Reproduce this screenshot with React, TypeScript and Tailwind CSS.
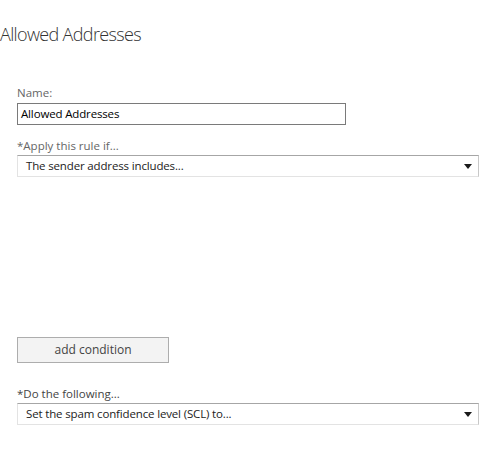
import React from "react";

function Caret() {
  return (
    <svg width="8" height="5" viewBox="0 0 8 5" className="shrink-0">
      <path d="M0 0 H8 L4 5 Z" fill="#1a1a1a" />
    </svg>
  );
}

function SelectBox({ text }: { text: string }) {
  return (
    <div className="flex h-[22px] w-[462px] items-center justify-between border border-t-[#a6a6a6] border-r-[#c8c8c8] border-b-[#e3e3e3] border-l-[#e3e3e3] bg-white pl-[8px] pr-[6px] text-[11.5px] tracking-[-0.15px] text-[#222]">
      <span className="leading-none">{text}</span>
      <Caret />
    </div>
  );
}

export default function App() {
  return (
    <div
      className="h-[457px] w-[501px] bg-white"
      style={{ fontFamily: '"Open Sans", "Noto Sans", sans-serif' }}
    >
      <div className="pt-[22px] text-[18px] font-light leading-[24px] tracking-[-0.65px] text-[#333]">
        Allowed Addresses
      </div>
      <div className="flex flex-col pl-[17px] pt-[40px]">
        <div className="text-[11.5px] leading-[14px] text-[#666]">Name:</div>
        <div className="mt-[3px] flex h-[22px] w-[329px] items-center border border-[#7a7a7a] bg-white pl-[3px] text-[11.5px] tracking-[-0.15px] text-black">
          <span className="leading-none">Allowed Addresses</span>
        </div>
        <div className="mt-[14px] text-[11.5px] leading-[14px] text-[#666]">*Apply this rule if...</div>
        <div className="mt-[2px]">
          <SelectBox text="The sender address includes..." />
        </div>
        <div className="mt-[160px]">
          <button className="flex h-[26px] w-[152px] items-center justify-center border border-[#adadad] bg-[#f3f3f3] text-[12px] text-[#444]">
            add condition
          </button>
        </div>
        <div className="mt-[24px] text-[11.5px] leading-[14px] text-[#444]">*Do the following...</div>
        <div className="mt-[2px]">
          <SelectBox text="Set the spam confidence level (SCL) to..." />
        </div>
      </div>
    </div>
  );
}
